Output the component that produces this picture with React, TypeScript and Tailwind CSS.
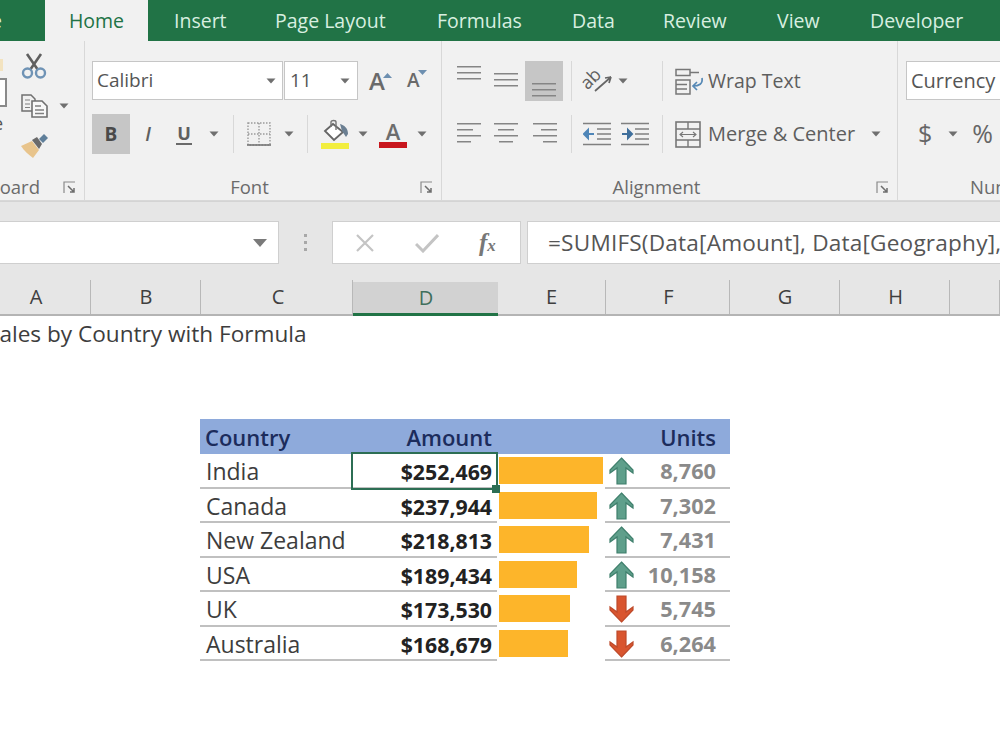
import type { ReactNode } from "react";

const tabs = [
  { name: "Insert", width: 101 },
  { name: "Page Layout", width: 162 },
  { name: "Formulas", width: 135 },
  { name: "Data", width: 91 },
  { name: "Review", width: 114 },
  { name: "View", width: 93 },
  { name: "Developer", width: 110 },
];

const columns = [
  { name: "A", width: 91, labelClass: "pr-[18px]" },
  { name: "B", width: 110, labelClass: "pl-[1px]" },
  { name: "C", width: 152, labelClass: "pl-[3px]" },
  { name: "D", width: 145, active: true, labelClass: "pl-[1px]" },
  { name: "E", width: 108, labelClass: "" },
  { name: "F", width: 124, labelClass: "pl-[2px]" },
  { name: "G", width: 110, labelClass: "pl-[1px]" },
  { name: "H", width: 110, labelClass: "pl-[2px]" },
  { name: "", width: 50, labelClass: "" },
];

const rows = [
  { country: "India", amount: "$252,469", bar: 104, up: true, units: "8,760" },
  { country: "Canada", amount: "$237,944", bar: 98, up: true, units: "7,302" },
  { country: "New Zealand", amount: "$218,813", bar: 90, up: true, units: "7,431" },
  { country: "USA", amount: "$189,434", bar: 78, up: true, units: "10,158" },
  { country: "UK", amount: "$173,530", bar: 71, up: false, units: "5,745" },
  { country: "Australia", amount: "$168,679", bar: 69, up: false, units: "6,264" },
];

function Caret({ className = "" }: { className?: string }) {
  return (
    <svg width="10" height="6" viewBox="0 0 10 6" className={className}>
      <path d="M0.5 0.5h9L5 5.5z" fill="#6f6f6f" />
    </svg>
  );
}

function Launcher() {
  return (
    <svg width="13" height="13" viewBox="0 0 13 13" fill="none">
      <path d="M12 1H1v11" stroke="#8a8a8a" strokeWidth="1.2" />
      <path d="M5 5l6 6M11 7v4H7" stroke="#6d6d6d" strokeWidth="1.5" />
    </svg>
  );
}

function Divider({ className = "" }: { className?: string }) {
  return <div className={`w-px bg-[#d8d8d8] ${className}`} />;
}

function Lines({ widths, align = "left" }: { widths: number[]; align?: "left" | "center" | "right" }) {
  return (
    <svg width="26" height={widths.length * 6} viewBox={`0 0 26 ${widths.length * 6}`}>
      {widths.map((w, i) => {
        const x = align === "left" ? 1 : align === "right" ? 25 - w : 13 - w / 2;
        return <rect key={i} x={x} y={i * 6 + 1} width={w} height="1.5" fill="#858585" />;
      })}
    </svg>
  );
}

function Indent({ right }: { right?: boolean }) {
  return (
    <svg width="28" height="24" viewBox="0 0 28 24" fill="none">
      <path d="M0 1.500h28M0 22.500h28M14 7h14M14 12h14M14 17h14" stroke="#808080" strokeWidth="1.6" />
      {right ? (
        <path d="M1 12h7M7 8l4 4-4 4z" stroke="#3f6f9c" strokeWidth="2" fill="#3f6f9c" />
      ) : (
        <path d="M11 12H4M5 8l-4 4 4 4z" stroke="#4f86b8" strokeWidth="2" fill="#4f86b8" />
      )}
    </svg>
  );
}

function Scissors() {
  return (
    <svg width="26" height="26" viewBox="0 0 26 26" fill="none">
      <path d="M6 1l11 16M20 1L9 17" stroke="#5f5f5f" strokeWidth="2.600" />
      <circle cx="6.500" cy="20" r="4.500" stroke="#6f93b5" strokeWidth="2.400" />
      <circle cx="19.500" cy="20" r="4.500" stroke="#6f93b5" strokeWidth="2.400" />
    </svg>
  );
}

function CopyIcon() {
  return (
    <svg width="27" height="24" viewBox="0 0 27 24" fill="none">
      <path d="M11 17H1V1h9l4 4v2" stroke="#707070" strokeWidth="1.500" />
      <path d="M4 6h5M4 10h5M4 13.500h5" stroke="#808080" strokeWidth="1.200" />
      <path d="M11 7h10l5 5v11H11z" stroke="#707070" strokeWidth="1.600" fill="#f8f8f8" />
      <path d="M14 12h6M14 16h9M14 19.500h9" stroke="#808080" strokeWidth="1.300" />
    </svg>
  );
}

function Painter() {
  return (
    <svg width="28" height="25" viewBox="0 0 28 25">
      <path d="M0 13l11-5 7 9-6 8C8 22 3 18 0 13z" fill="#e8c48c" />
      <path d="M11 7l5-3 5 7-3 5z" fill="#6a6a6a" />
      <path d="M18 6l5-5 4 4-5 5z" fill="#5f7f9a" />
    </svg>
  );
}

function FillColor() {
  return (
    <svg width="30" height="30" viewBox="0 0 30 30" fill="none">
      <path d="M4 12l8-7 10 8-9 8z" fill="#fff" stroke="#666" strokeWidth="1.800" />
      <path d="M10 8V3c0-2 5-2 5 0v8" stroke="#777" strokeWidth="1.400" />
      <path d="M19 5c4 1 8 4 8 10l-2 3-4-6z" fill="#6b7f92" />
      <rect x="0" y="24" width="28" height="6" fill="#f2ee3f" />
    </svg>
  );
}

function WrapIcon() {
  return (
    <svg width="30" height="27" viewBox="0 0 30 27" fill="none">
      <path d="M1 1.500h14v6H1zM1 12h14v14H1z" stroke="#777" strokeWidth="1.500" />
      <path d="M15 4.500h9M1 16.500h11M1 21h11" stroke="#777" strokeWidth="1.400" />
      <path d="M27 10c1 6-3 8-9 8M22 14l-4 4 4 4" stroke="#5588b5" strokeWidth="1.700" />
    </svg>
  );
}

function MergeIcon() {
  return (
    <svg width="26" height="27" viewBox="0 0 26 27" fill="none">
      <rect x="1" y="1" width="24" height="25" stroke="#777" strokeWidth="1.600" />
      <path d="M1 8h24M1 19h24M13 1v7M13 19v7" stroke="#777" strokeWidth="1.400" />
      <path d="M5 13.500h16M8 11l-3 2.500L8 16M18 11l3 2.500L18 16" stroke="#777" strokeWidth="1.100" />
    </svg>
  );
}

function OrientIcon() {
  return (
    <svg width="30" height="26" viewBox="0 0 30 26" fill="none" className="overflow-visible">
      <path d="M12 23L28 9M28 9l-6 1M28 9l-2 6" stroke="#666" strokeWidth="1.700" />
      <text
        x="-2"
        y="17"
        fontSize="18"
        fill="#5f5f5f"
        transform="rotate(-45 8 12)"
        fontFamily="'Open Sans', sans-serif"
      >
        ab
      </text>
    </svg>
  );
}

function Arrow({ up }: { up: boolean }) {
  return (
    <svg width="25" height="28" viewBox="0 0 25 28">
      <path
        d={
          up
            ? "M12.500 1L24 13v3l-7-5v16H8V11l-7 5v-3z"
            : "M12.500 27L24 15v-3l-7 5V1H8v16l-7-5v3z"
        }
        fill={up ? "#5f9f8b" : "#d9552f"}
        stroke={up ? "#3f7f6c" : "#bd4a2b"}
        strokeWidth="1.200"
      />
    </svg>
  );
}

function GroupLabel({
  children,
  launcher,
  className = "",
}: {
  children: ReactNode;
  launcher?: boolean;
  className?: string;
}) {
  return (
    <div className={`relative mt-auto mb-[3px] h-[20px] text-center text-[18.500px] leading-[20px] text-[#6b6b6b] ${className}`}>
      {children}
      {launcher ? (
        <span className="absolute top-[4px] right-[8px] flex">
          <Launcher />
        </span>
      ) : null}
    </div>
  );
}

function TabRow() {
  return (
    <div className="flex h-[41px] items-center bg-[#217346] text-[19.500px] whitespace-nowrap text-[#d8efe0]">
      <div className="flex h-full w-[45px] items-center justify-end overflow-hidden pr-[43px]">File</div>
      <div className="flex h-full w-[103px] items-center justify-center bg-[#f1f1f1] text-[#217346]">Home</div>
      <div className="w-[26px]" />
      {tabs.map((t) => (
        <div key={t.name} style={{ width: t.width }} className="shrink-0">
          {t.name}
        </div>
      ))}
    </div>
  );
}

function ClipboardGroup() {
  return (
    <div className="relative flex h-full w-[84px] shrink-0 flex-col overflow-hidden">
      <div className="flex flex-col items-start pt-[12px] pl-[21px]">
        <Scissors />
        <div className="mt-[15px] flex items-center gap-[11px]">
          <CopyIcon />
          <Caret />
        </div>
        <div className="mt-[15px]">
          <Painter />
        </div>
      </div>
      <div className="absolute top-[18px] left-[-3px] h-[12px] w-[6px] bg-[#f3e3c0]" />
      <div className="absolute top-[37px] left-[-12px] h-[29px] w-[19px] border-2 border-[#8a8a8a] bg-white" />
      <div className="absolute top-[72px] left-[-7px] text-[18px] leading-[20px] text-[#555]">e</div>
      <div className="relative mt-auto mb-[3px] flex h-[20px] justify-end pr-[44px] text-[18.500px] leading-[20px] text-[#6b6b6b]">
        <span>oard</span>
        <span className="absolute top-[4px] right-[8px] flex">
          <Launcher />
        </span>
      </div>
    </div>
  );
}

function FontGroup() {
  return (
    <div className="flex h-full w-[357px] shrink-0 flex-col border-l border-[#d8d8d8] pt-[20px] pl-[7px]">
      <div className="flex items-center">
        <div className="flex h-[39px] w-[191px] items-center justify-between border border-[#c6c6c6] bg-white pr-[6px] pl-[4px] text-[19px] text-[#555]">
          Calibri
          <Caret />
        </div>
        <div className="ml-[1px] flex h-[39px] w-[74px] items-center justify-between border border-[#c6c6c6] bg-white pr-[7px] pl-[5px] text-[19px] text-[#555]">
          11
          <Caret />
        </div>
        <div className="relative ml-[11px] text-[24px] leading-none font-semibold text-[#6a6a6a]">
          A
          <svg width="9" height="5" viewBox="0 0 9 5" className="absolute top-[4px] right-[-7px]">
            <path d="M0 5l4.500-5L9 5z" fill="#6d8fb0" />
          </svg>
        </div>
        <div className="relative ml-[22px] text-[19px] leading-none font-semibold text-[#6a6a6a]">
          A
          <svg width="9" height="5" viewBox="0 0 9 5" className="absolute top-[-1px] right-[-8px]">
            <path d="M0 0h9L4.500 5z" fill="#6d8fb0" />
          </svg>
        </div>
      </div>
      <div className="mt-[14px] flex h-[40px] items-center">
        <div className="flex h-[40px] w-[38px] items-center justify-center bg-[#c6c6c6] text-[19px] font-bold text-[#4a4a4a]">
          B
        </div>
        <div className="ml-[10px] w-[16px] text-center text-[19px] font-semibold text-[#5f5f5f] italic">I</div>
        <div className="ml-[20px] w-[16px] border-b-2 border-[#6a6a6a] text-center text-[18px] leading-[20px] font-bold text-[#5f5f5f]">
          U
        </div>
        <Caret className="ml-[17px]" />
        <Divider className="ml-[14px] h-[38px]" />
        <svg width="24" height="24" viewBox="0 0 24 24" fill="none" className="ml-[13px]">
          <path d="M1 1h22v22H1zM12 1v22M1 12h22" stroke="#9a9a9a" strokeWidth="1.400" strokeDasharray="1.500 1.500" />
          <path d="M0 23h24" stroke="#777" strokeWidth="1.600" />
        </svg>
        <Caret className="ml-[13px]" />
        <Divider className="ml-[13px] h-[38px]" />
        <div className="ml-[13px] flex">
          <FillColor />
        </div>
        <Caret className="ml-[7px]" />
        <div className="ml-[11px] flex w-[28px] flex-col items-center">
          <span className="text-[22px] leading-[22px] font-semibold text-[#6d6d6d]">A</span>
          <span className="h-[6px] w-full bg-[#c8161d]" />
        </div>
        <Caret className="ml-[10px]" />
      </div>
      <GroupLabel launcher className="pr-[34px]">
        Font
      </GroupLabel>
    </div>
  );
}

function AlignmentGroup() {
  return (
    <div className="flex h-full w-[456px] shrink-0 flex-col border-l border-[#d8d8d8] pt-[20px] pl-[14px]">
      <div className="flex h-[40px] items-center">
        <div className="flex h-full w-[37px] items-start pt-[4px]">
          <Lines widths={[24, 24, 24]} align="center" />
        </div>
        <div className="flex h-full w-[32px] items-center">
          <Lines widths={[24, 24, 24]} align="center" />
        </div>
        <div className="flex h-full w-[38px] items-end justify-center bg-[#c6c6c6] pb-[1px]">
          <Lines widths={[24, 24, 24]} align="center" />
        </div>
        <Divider className="ml-[8px] h-[40px]" />
        <div className="ml-[11px] flex">
          <OrientIcon />
        </div>
        <Caret className="ml-[5px]" />
        <Divider className="ml-[34px] h-[40px]" />
        <div className="ml-[12px] flex">
          <WrapIcon />
        </div>
        <span className="ml-[3px] text-[19.500px] text-[#5e5e5e]">Wrap Text</span>
      </div>
      <div className="mt-[13px] flex h-[40px] items-center">
        <div className="w-[37px]">
          <Lines widths={[24, 16, 24, 14]} />
        </div>
        <div className="w-[39px]">
          <Lines widths={[24, 16, 24, 14]} align="center" />
        </div>
        <div className="w-[39px]">
          <Lines widths={[24, 16, 24, 14]} align="right" />
        </div>
        <Divider className="h-[38px]" />
        <div className="ml-[11px] flex">
          <Indent />
        </div>
        <div className="ml-[10px] flex">
          <Indent right />
        </div>
        <Divider className="ml-[13px] h-[38px]" />
        <div className="ml-[12px] flex">
          <MergeIcon />
        </div>
        <span className="ml-[7px] text-[20px] text-[#5e5e5e]">Merge &amp; Center</span>
        <Caret className="ml-[16px]" />
      </div>
      <GroupLabel launcher className="pr-[40px]">
        Alignment
      </GroupLabel>
    </div>
  );
}

function NumberGroup() {
  return (
    <div className="flex h-full flex-1 flex-col overflow-hidden border-l border-[#d8d8d8] pt-[20px] pl-[8px] whitespace-nowrap">
      <div className="flex h-[39px] w-[120px] shrink-0 items-center border border-[#c6c6c6] bg-white pl-[4px] text-[20px] text-[#555]">
        Currency
      </div>
      <div className="mt-[14px] flex h-[40px] items-center pl-[12px] text-[25px] text-[#666]">
        <span>$</span>
        <Caret className="ml-[16px]" />
        <span className="ml-[14px]">%</span>
      </div>
      <div className="mt-auto mb-[3px] h-[20px] pl-[64px] text-[18.500px] leading-[20px] text-[#6b6b6b]">Number</div>
    </div>
  );
}

function FormulaBar() {
  return (
    <div className="flex h-[79px] items-start border-t border-[#d4d4d4] bg-[#e6e6e6] pt-[19px] whitespace-nowrap">
      <div className="flex h-[43px] w-[279px] items-center justify-end border border-l-0 border-[#cfcfcf] bg-white pr-[11px]">
        <svg width="14" height="8" viewBox="0 0 14 8">
          <path d="M0 0h14L7 8z" fill="#7a7a7a" />
        </svg>
      </div>
      <div className="flex h-[43px] w-[53px] flex-col items-center justify-center gap-[4px]">
        <span className="h-[3px] w-[3px] bg-[#a8a8a8]" />
        <span className="h-[3px] w-[3px] bg-[#a8a8a8]" />
        <span className="h-[3px] w-[3px] bg-[#a8a8a8]" />
      </div>
      <div className="flex h-[43px] w-[189px] items-center border border-[#cfcfcf] bg-white pl-[22px]">
        <svg width="20" height="20" viewBox="0 0 20 20" fill="none">
          <path d="M2 2l16 16M18 2L2 18" stroke="#c4c4c4" strokeWidth="2.200" />
        </svg>
        <svg width="24" height="20" viewBox="0 0 24 20" fill="none" className="ml-[40px]">
          <path d="M1 11l7 7L23 2" stroke="#c4c4c4" strokeWidth="3" />
        </svg>
        <span className="ml-[40px] font-['Liberation_Serif',serif] text-[25px] leading-none font-bold text-[#777] italic">
          f<span className="text-[17px]">x</span>
        </span>
      </div>
      <div className="ml-[6px] flex h-[43px] flex-1 items-center overflow-hidden border border-r-0 border-[#cfcfcf] bg-white pl-[20px] text-[22.600px] tracking-[0.200px] text-[#555]">
        =SUMIFS(Data[Amount], Data[Geography],
      </div>
    </div>
  );
}

function ColumnHeaders() {
  return (
    <div className="flex h-[36px] border-b-2 border-[#b4b4b4] bg-[#e6e6e6] text-[20px] text-[#3f3f3f]">
      {columns.map((c) => (
        <div
          key={c.name || "rest"}
          style={{ width: c.width }}
          className={
            c.active
              ? `-mb-[2px] mt-[2px] flex shrink-0 items-center justify-center border-b-[3px] border-[#217346] bg-[#d2d2d2] text-[#3f6f5c] ${c.labelClass}`
              : `flex shrink-0 items-center justify-center border-r border-[#b8b8b8] ${c.labelClass}`
          }
        >
          {c.name}
        </div>
      ))}
    </div>
  );
}

function SalesTable() {
  return (
    <div className="relative ml-[200px] w-[530px] text-[23px] leading-none">
      <div className="flex h-[35px] items-center bg-[#8eaadb] text-[22px] font-semibold text-[#1c2c5c]">
        <div className="w-[152px] pl-[5px]">Country</div>
        <div className="w-[140px] text-right">Amount</div>
        <div className="flex-1 pr-[14px] text-right">Units</div>
      </div>
      {rows.map((r) => (
        <div key={r.country} className="flex h-[34.500px] items-stretch">
          <div className="flex w-[152px] items-center border-b-2 border-[#c0c0c0] pt-[3px] pl-[6px] text-[#3d3d3d]">
            {r.country}
          </div>
          <div className="flex w-[145px] items-center justify-end border-b-2 border-[#c0c0c0] pt-[3px] pr-[5px] text-[21.300px] font-bold text-[#222]">
            {r.amount}
          </div>
          <div className="flex w-[108px] items-start pt-[3px] pl-[2px]">
            <div style={{ width: r.bar }} className="h-[27px] bg-[#fdb52a]" />
          </div>
          <div className="flex flex-1 items-center justify-between border-b-2 border-[#c0c0c0] pt-[2px] pr-[14px] pl-[4px] text-[21.700px] font-bold text-[#8a8a8a]">
            <Arrow up={r.up} />
            <span>{r.units}</span>
          </div>
        </div>
      ))}
      <div className="absolute top-[33px] left-[151px] h-[38px] w-[147px] border-[2.500px] border-[#2c6e54]">
        <span className="absolute right-[-4px] bottom-[-5px] h-[8px] w-[8px] bg-[#2c6e54]" />
      </div>
    </div>
  );
}

export default function App() {
  return (
    <div className="h-[750px] w-[1000px] overflow-hidden bg-white font-['Open_Sans',sans-serif]">
      <TabRow />
      <div className="flex h-[160px] border-b border-[#d8d8d8] bg-[#f1f1f1] whitespace-nowrap">
        <ClipboardGroup />
        <FontGroup />
        <AlignmentGroup />
        <NumberGroup />
      </div>
      <FormulaBar />
      <ColumnHeaders />
      <div className="-ml-[13px] flex h-[36px] items-center text-[22.600px] whitespace-nowrap text-[#3d3d3d]">
        Sales by Country with Formula
      </div>
      <div className="mt-[67px]">
        <SalesTable />
      </div>
    </div>
  );
}
